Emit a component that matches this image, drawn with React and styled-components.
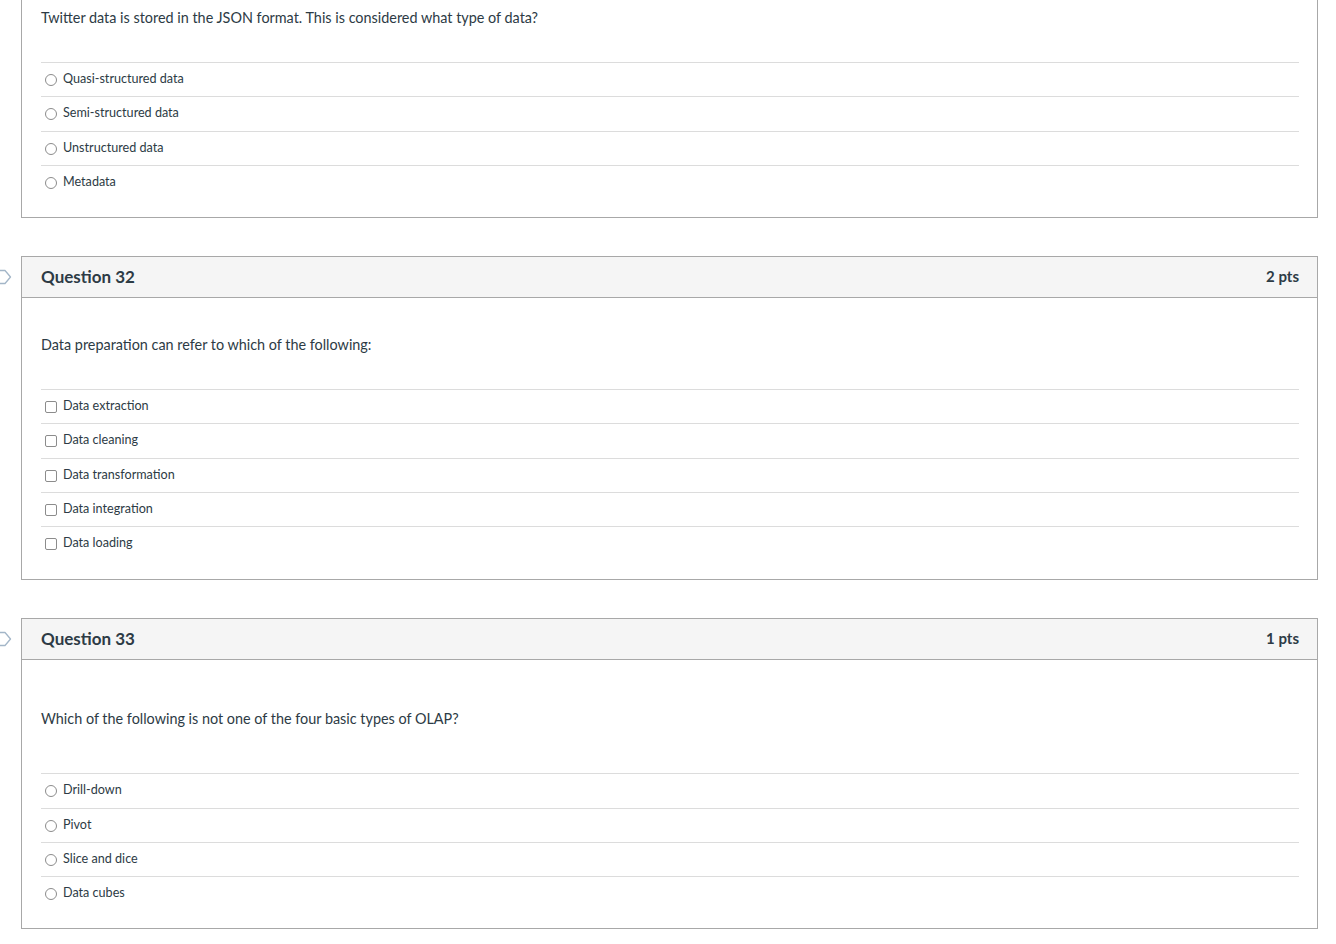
import styled, { createGlobalStyle } from 'styled-components'

const GlobalStyle = createGlobalStyle`
  html, body {
    margin: 0;
    padding: 0;
    background: #fff;
    overflow: hidden;
  }
  body {
    font-family: Lato, "Noto Sans", "Liberation Sans", sans-serif;
    color: #2d3b45;
  }
`

const Page = styled.div`
  padding: 0 18px 40px 21px;
  margin-top: -71px;
  display: flex;
  flex-direction: column;
  gap: 38px;
`

const Card = styled.section`
  position: relative;
  border: 1px solid #a8a8a8;
  background: #fff;
`

const Flag = styled.svg`
  position: absolute;
  left: -30px;
  top: 12px;
`

const Header = styled.header`
  height: 41px;
  box-sizing: border-box;
  display: flex;
  align-items: center;
  justify-content: space-between;
  padding: 0 18px 2px 19px;
  background: #f5f5f5;
  border-bottom: 1px solid #a8a8a8;
`

const Title = styled.h2`
  margin: 0;
  font-size: 17px;
  font-weight: 700;
  color: #2d3b45;
`

const Points = styled.span`
  font-size: 15px;
  font-weight: 700;
  color: #2d3b45;
`

const Body = styled.div`
  padding: 0 18px ${p => p.$tail}px 19px;
`

const QuestionText = styled.p`
  margin: 0;
  font-size: 14.4px;
  line-height: 20px;
  padding: ${p => p.$spaced ? '49px 0 44px' : '37px 0 34px'};
`

const AnswerList = styled.ul`
  list-style: none;
  margin: 0;
  padding: 0;
`

const Answer = styled.li`
  height: 34.25px;
  box-sizing: border-box;
  border-top: 1px solid #dcdcdc;
  display: flex;
  align-items: center;
  gap: 6px;
  padding: 0 0 2px 4px;
  font-size: 12.6px;
`

const Radio = styled.span`
  width: 10px;
  height: 10px;
  border: 1px solid #8c8c8c;
  border-radius: ${p => p.$square ? '2px' : '50%'};
  background: #fff;
  flex: none;
  margin-top: 3px;
`

const FlagIcon = () => (
  <Flag width="20" height="16" viewBox="0 0 20 16">
    <path d="M0 1.5 H13 L18.5 8 L13 14.5 H0 Z" fill="#fff" stroke="#a3b6c8" strokeWidth="1.3" strokeLinejoin="round" />
  </Flag>
)

const questions = [
  {
    id: 31,
    pts: 1,
    kind: 'radio',
    tail: 18,
    text: 'Twitter data is stored in the JSON format. This is considered what type of data?',
    answers: ['Quasi-structured data', 'Semi-structured data', 'Unstructured data', 'Metadata']
  },
  {
    id: 32,
    pts: 2,
    kind: 'check',
    tail: 19,
    text: 'Data preparation can refer to which of the following:',
    answers: ['Data extraction', 'Data cleaning', 'Data transformation', 'Data integration', 'Data loading']
  },
  {
    id: 33,
    pts: 1,
    kind: 'radio',
    tail: 18,
    spaced: true,
    text: 'Which of the following is not one of the four basic types of OLAP?',
    answers: ['Drill-down', 'Pivot', 'Slice and dice', 'Data cubes']
  }
]

const App = () => (
  <>
    <GlobalStyle />
    <Page>
      {questions.map(q => (
        <Card key={q.id}>
          <FlagIcon />
          <Header>
            <Title>Question {q.id}</Title>
            <Points>{q.pts} pts</Points>
          </Header>
          <Body $tail={q.tail}>
            <QuestionText $spaced={q.spaced}>{q.text}</QuestionText>
            <AnswerList>
              {q.answers.map(a => (
                <Answer key={a}>
                  <Radio $square={q.kind === 'check'} />
                  {a}
                </Answer>
              ))}
            </AnswerList>
          </Body>
        </Card>
      ))}
    </Page>
  </>
)

export default App
